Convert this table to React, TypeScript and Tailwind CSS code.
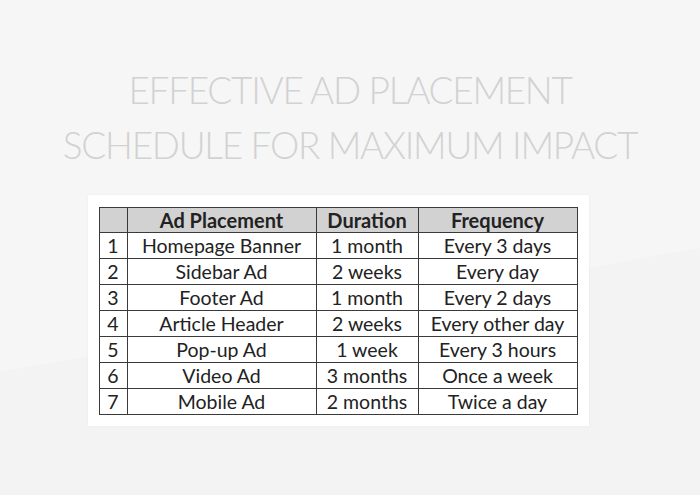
const rows = [
  { placement: "Homepage Banner", duration: "1 month", frequency: "Every 3 days" },
  { placement: "Sidebar Ad", duration: "2 weeks", frequency: "Every day" },
  { placement: "Footer Ad", duration: "1 month", frequency: "Every 2 days" },
  { placement: "Article Header", duration: "2 weeks", frequency: "Every other day" },
  { placement: "Pop-up Ad", duration: "1 week", frequency: "Every 3 hours" },
  { placement: "Video Ad", duration: "3 months", frequency: "Once a week" },
  { placement: "Mobile Ad", duration: "2 months", frequency: "Twice a day" },
]

const cell = "border border-[#3a3a3a] text-center leading-none"

export default function App() {
  return (
    <div className="relative w-[700px] h-[495px] overflow-hidden bg-[#f3f3f3] font-['Lato',sans-serif]">
      {/* diagonal background band */}
      <svg className="absolute inset-0" width="700" height="495" viewBox="0 0 700 495">
        <polygon points="0,0 700,0 700,248 0,372" fill="#f6f6f6" />
      </svg>

      <div className="relative flex flex-col items-center">
        <h1 className="mt-[62px] text-center text-[37px] font-light leading-[55px] text-[#d2d2d2] tracking-[-1.3px]">
          EFFECTIVE AD PLACEMENT
          <br />
          SCHEDULE FOR MAXIMUM IMPACT
        </h1>

        <div className="mt-[23px] ml-[-24px] bg-white px-[11px] pt-[12px] pb-[11px] shadow-[0_0_2px_rgba(0,0,0,0.06)]">
          <table className="border-collapse text-[19.5px] text-[#222]">
            <thead>
              <tr className="h-[25px] bg-[#d2d2d2]">
                <th className={`${cell} w-[28px]`}></th>
                <th className={`${cell} w-[189px] text-[20px] font-bold`}>Ad Placement</th>
                <th className={`${cell} w-[102px] text-[20px] font-bold`}>Duration</th>
                <th className={`${cell} w-[159px] text-[20px] font-bold`}>Frequency</th>
              </tr>
            </thead>
            <tbody>
              {rows.map((r, i) => (
                <tr key={i} className="h-[26px]">
                  <td className={cell}>{i + 1}</td>
                  <td className={cell}>{r.placement}</td>
                  <td className={cell}>{r.duration}</td>
                  <td className={cell}>{r.frequency}</td>
                </tr>
              ))}
            </tbody>
          </table>
        </div>
      </div>
    </div>
  )
}
